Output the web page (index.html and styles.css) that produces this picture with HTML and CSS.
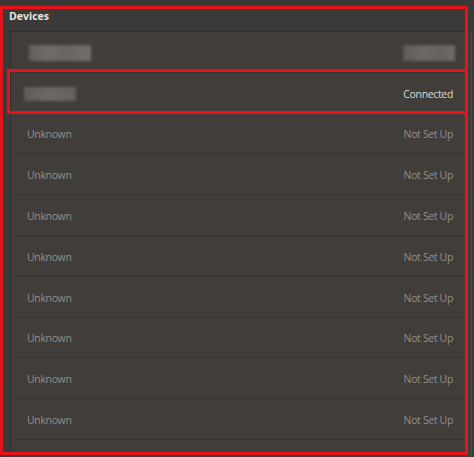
FILE: index.html
```html
<!DOCTYPE html>
<html>
<head>
<meta charset="utf-8">
<link rel="stylesheet" href="styles.css">
</head>
<body>
<div class="screen">
  <div class="header">Devices</div>
  <div class="list">
    <div class="row">
      <div class="blur blur-a"></div>
      <div class="blur blur-b"></div>
    </div>
    <div class="row">
      <div class="blur blur-c"></div>
      <span class="status bright">Connected</span>
    </div>
    <div class="row"><span class="name">Unknown</span><span class="status">Not Set Up</span></div>
    <div class="row"><span class="name">Unknown</span><span class="status">Not Set Up</span></div>
    <div class="row"><span class="name">Unknown</span><span class="status">Not Set Up</span></div>
    <div class="row"><span class="name">Unknown</span><span class="status">Not Set Up</span></div>
    <div class="row"><span class="name">Unknown</span><span class="status">Not Set Up</span></div>
    <div class="row"><span class="name">Unknown</span><span class="status">Not Set Up</span></div>
    <div class="row"><span class="name">Unknown</span><span class="status">Not Set Up</span></div>
    <div class="row"><span class="name">Unknown</span><span class="status">Not Set Up</span></div>
    <div class="row"></div>
  </div>
  <div class="mark mark-outer"></div>
  <div class="mark mark-row"></div>
</div>
</body>
</html>
```
FILE: styles.css
```css
html, body {
  margin: 0;
  padding: 0;
  background: #3c3a38;
  overflow: hidden;
}
.screen {
  position: relative;
  width: 474px;
  height: 457px;
  overflow: hidden;
  font-family: "Open Sans", "DejaVu Sans", sans-serif;
}
.header {
  padding: 9px 0 0 9px;
  height: 22px;
  box-sizing: border-box;
  font-size: 10.5px;
  font-weight: bold;
  color: #e6e3df;
  line-height: 14px;
}
.list {
  margin: 9px 0 0 10px;
  width: 460px;
  border-top: 1px solid #302e2c;
  border-left: 1px solid #302e2c;
  border-right: 1px solid #4a4745;
  background: #403d3b;
}
.row {
  height: 40.8px;
  box-sizing: border-box;
  border-bottom: 1px solid #373533;
  display: flex;
  align-items: center;
  justify-content: space-between;
  padding: 2px 18px 0 16px;
  font-size: 10.5px;
  letter-spacing: -0.35px;
  color: #928f8c;
}
.status.bright {
  margin-left: auto;
  color: #dcd9d5;
}
.blur {
  background: #6e6b68;
  filter: blur(1.5px);
}
.blur-a {
  width: 62px;
  height: 16px;
  margin-left: 2px;
  background: linear-gradient(90deg, #615e5b 0%, #6f6c69 30%, #686562 60%, #716e6b 100%);
}
.blur-b {
  width: 52px;
  height: 16px;
  margin-right: -2px;
  background: linear-gradient(90deg, #5d5a57 0%, #6c6966 40%, #64615e 70%, #6e6b68 100%);
}
.blur-c {
  width: 52px;
  height: 14px;
  margin-left: -3px;
  background: linear-gradient(90deg, #5f5c59 0%, #6b6865 50%, #63605d 100%);
}
.mark {
  position: absolute;
  border: 3px solid #e8121a;
  box-sizing: border-box;
  pointer-events: none;
}
.mark-outer {
  left: 0;
  top: 6px;
  width: 468px;
  height: 449px;
}
.mark-row {
  left: 7px;
  top: 69px;
  width: 461px;
  height: 45px;
}
```
